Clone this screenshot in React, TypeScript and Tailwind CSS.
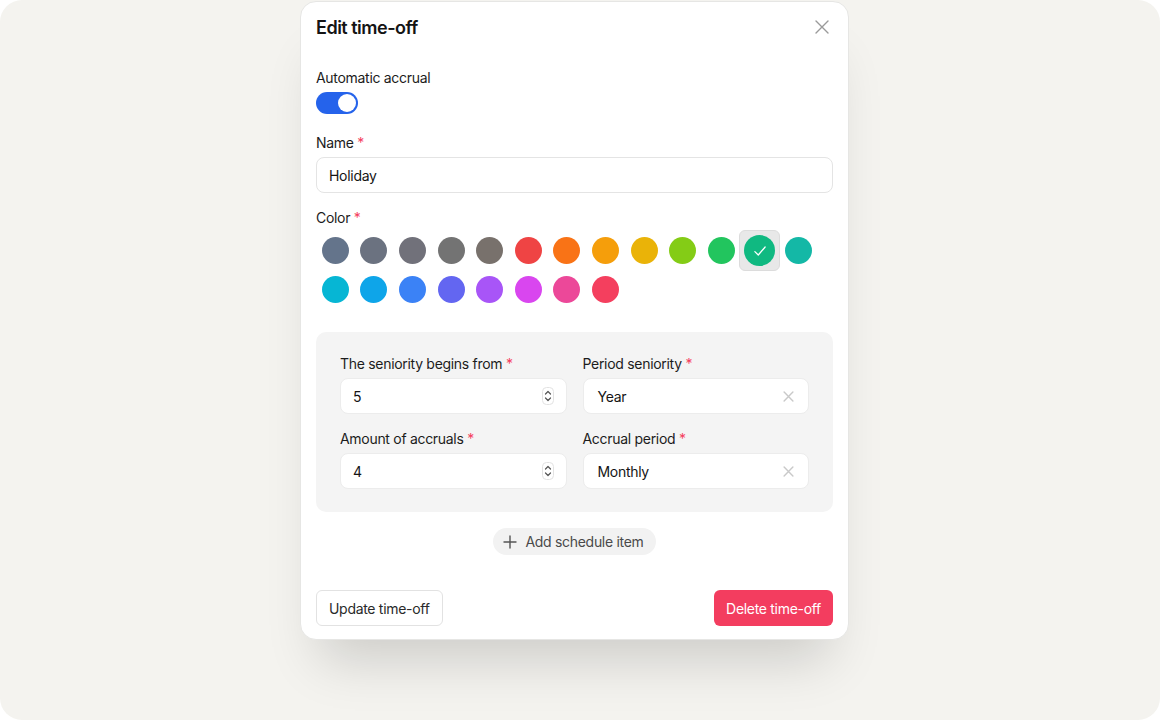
import React from "react";

const row1 = ["#64748b", "#6b7280", "#71717a", "#737373", "#78716c", "#ef4444", "#f97316", "#f59e0b", "#eab308", "#84cc16", "#22c55e", "#10b981", "#14b8a6"];
const row2 = ["#06b6d4", "#0ea5e9", "#3b82f6", "#6366f1", "#a855f7", "#d946ef", "#ec4899", "#f43f5e"];
const SELECTED = 11;

function Stepper() {
  return (
    <svg width="12" height="18" viewBox="0 0 12 18" fill="none">
      <rect x="0.5" y="0.5" width="11" height="17" rx="4" stroke="#e2e2e2" />
      <path d="M3.5 7L6 4.5L8.5 7" stroke="#555" strokeWidth="1.2" strokeLinecap="round" strokeLinejoin="round" />
      <path d="M3.5 11L6 13.5L8.5 11" stroke="#555" strokeWidth="1.2" strokeLinecap="round" strokeLinejoin="round" />
    </svg>
  );
}

function ClearX() {
  return (
    <svg width="11" height="11" viewBox="0 0 10 10" fill="none">
      <path d="M1 1L9 9M9 1L1 9" stroke="#c9c9c9" strokeWidth="1.3" strokeLinecap="round" />
    </svg>
  );
}

function Label({ children }: { children: React.ReactNode }) {
  return (
    <div className="text-[14px] leading-5 text-[#1c1c1c] mb-1">
      {children} <span className="text-[#f43f5e]">*</span>
    </div>
  );
}

function NumberField({ label, value }: { label: string; value: string }) {
  return (
    <div>
      <Label>{label}</Label>
      <div className="h-9 bg-white rounded-lg border border-[#ececec] flex items-center justify-between pl-3 pr-3 text-[14px] text-[#151515]">
        <span>{value}</span>
        <Stepper />
      </div>
    </div>
  );
}

function SelectField({ label, value }: { label: string; value: string }) {
  return (
    <div>
      <Label>{label}</Label>
      <div className="h-9 bg-white rounded-lg border border-[#ececec] flex items-center justify-between pl-[14px] pr-[14px] text-[14px] text-[#151515]">
        <span>{value}</span>
        <ClearX />
      </div>
    </div>
  );
}

function Swatch({ color, selected }: { color: string; selected?: boolean }) {
  if (selected) {
    return (
      <div className="w-[38.6px] h-[39px] flex items-center justify-center">
        <div className="w-[41px] h-[41px] shrink-0 rounded-md bg-[#e8e8e8] border border-[#dcdcdc] flex items-center justify-center">
          <div className="w-[31px] h-[31px] rounded-full flex items-center justify-center" style={{ backgroundColor: color }}>
            <svg width="16" height="16" viewBox="0 0 14 14" fill="none">
              <path d="M2.5 7.5L5.5 10.5L11.5 3.5" stroke="white" strokeWidth="1.1" strokeLinecap="round" strokeLinejoin="round" />
            </svg>
          </div>
        </div>
      </div>
    );
  }
  return (
    <div className="w-[38.6px] h-[39px] flex items-center justify-center">
      <div className="w-[27px] h-[27px] rounded-full" style={{ backgroundColor: color }} />
    </div>
  );
}

export default function App() {
  return (
    <div className="w-[1160px] h-[720px] bg-white tracking-[-0.3px]" style={{ fontFamily: "Inter, 'Noto Sans', sans-serif" }}>
      <div className="w-full h-full bg-[#f4f3ef] rounded-[22px] flex justify-center pt-px pr-[11px]">
        <div className="w-[549px] h-[639px] bg-white rounded-2xl border border-[#e6e6e4] px-[15px] shadow-[0_40px_50px_-20px_rgba(0,0,0,0.16)] flex flex-col">
          <div className="h-[50px] flex items-center justify-between">
            <div className="text-[18px] font-semibold text-[#141414] tracking-[-0.5px]">Edit time-off</div>
            <svg width="16" height="16" viewBox="0 0 16 16" fill="none" className="mr-[3px]">
              <path d="M2 2L14 14M14 2L2 14" stroke="#9a9a9a" strokeWidth="1.4" strokeLinecap="round" />
            </svg>
          </div>

          <div className="mt-4 text-[14px] leading-5 text-[#1c1c1c]">Automatic accrual</div>
          <div className="mt-1 w-[42px] h-[22px] rounded-full bg-[#2563eb] flex items-center justify-end pr-[2px]">
            <div className="w-[18px] h-[18px] rounded-full bg-white" />
          </div>

          <div className="mt-[19px]">
            <Label>Name</Label>
            <div className="h-9 rounded-lg border border-[#e4e4e4] flex items-center px-3 text-[14px] text-[#151515]">Holiday</div>
          </div>

          <div className="mt-[15px]">
            <div className="text-[14px] leading-5 text-[#1c1c1c]">
              Color <span className="text-[#f43f5e]">*</span>
            </div>
            <div className="mt-[3px] flex">
              {row1.map((c, i) => (
                <Swatch key={c} color={c} selected={i === SELECTED} />
              ))}
            </div>
            <div className="flex">
              {row2.map((c) => (
                <Swatch key={c} color={c} />
              ))}
            </div>
          </div>

          <div className="mt-[23px] bg-[#f4f4f4] rounded-[10px] px-6 pt-[22px] pb-[23px] grid grid-cols-2 gap-x-4 gap-y-[15px]">
            <NumberField label="The seniority begins from" value="5" />
            <SelectField label="Period seniority" value="Year" />
            <NumberField label="Amount of accruals" value="4" />
            <SelectField label="Accrual period" value="Monthly" />
          </div>

          <div className="mt-4 flex justify-center">
            <div className="h-[27px] rounded-full bg-[#f2f2f2] flex items-center pl-[10px] pr-[12px] gap-2 text-[14px] text-[#4a4a4a]">
              <svg width="14" height="14" viewBox="0 0 14 14" fill="none">
                <path d="M7 1V13M1 7H13" stroke="#555" strokeWidth="1.4" strokeLinecap="round" />
              </svg>
              <span>Add schedule item</span>
            </div>
          </div>

          <div className="mt-[35px] flex items-center justify-between">
            <div className="h-9 px-3 rounded-md border border-[#e2e2e2] flex items-center text-[14px] text-[#2a2a2a]">Update time-off</div>
            <div className="h-9 px-3 rounded-md bg-[#f33d5f] flex items-center text-[14px] text-white">Delete time-off</div>
          </div>
        </div>
      </div>
    </div>
  );
}
